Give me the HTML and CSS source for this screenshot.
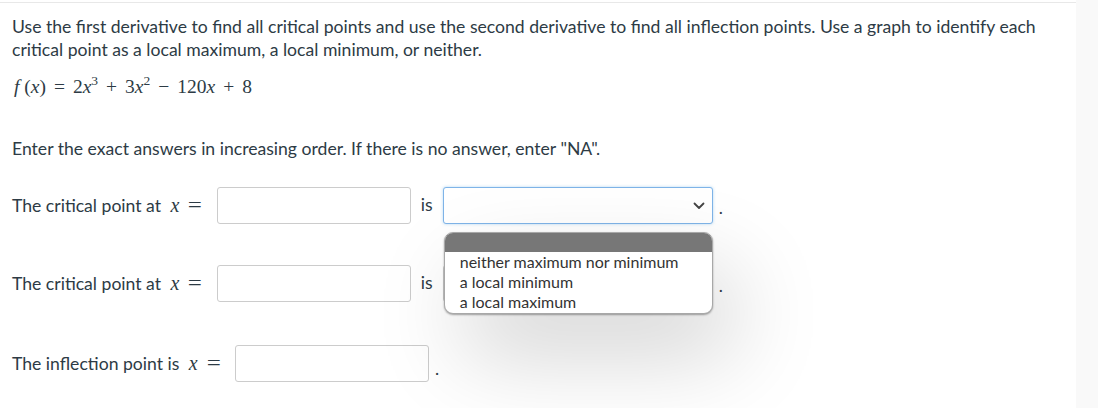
FILE: index.html
```html
<!DOCTYPE html>
<html>
<head>
<meta charset="utf-8">
<link rel="stylesheet" href="styles.css">
</head>
<body>
<div class="page">
  <main class="question">
    <p class="intro">Use the first derivative to find all critical points and use the second derivative to find all inflection points. Use a graph to identify each critical point as a local maximum, a local minimum, or neither.</p>
    <p class="formula"><span class="mi">f</span> <span class="mo">(</span><span class="mi">x</span><span class="mo">)</span><span class="rel">=</span>2<span class="mi">x</span><sup>3</sup><span class="bin">+</span>3<span class="mi">x</span><sup>2</sup><span class="bin">−</span>120<span class="mi">x</span><span class="bin">+</span>8</p>
    <p class="instr">Enter the exact answers in increasing order. If there is no answer, enter "NA".</p>

    <div class="row row1">
      <span class="label">The critical point at <span class="math"><span class="mi">x</span><span class="rel">=</span></span></span>
      <span class="box"></span>
      <span class="is">is</span>
      <span class="select focused">
        <svg class="chev" width="12" height="8" viewBox="0 0 12 8"><path d="M1.5 1.5 L6 6 L10.5 1.5" fill="none" stroke="#444" stroke-width="1.8" stroke-linecap="round" stroke-linejoin="round"/></svg>
        <div class="menu">
          <div class="menu-head"></div>
          <div class="opt">neither maximum nor minimum</div>
          <div class="opt">a local minimum</div>
          <div class="opt">a local maximum</div>
        </div>
      </span>
      <span class="dot">.</span>
    </div>

    <div class="row row2">
      <span class="label">The critical point at <span class="math"><span class="mi">x</span><span class="rel">=</span></span></span>
      <span class="box"></span>
      <span class="is">is</span>
      <span class="select"></span>
      <span class="dot">.</span>
    </div>

    <div class="row row3">
      <span class="label">The inflection point is <span class="math"><span class="mi">x</span><span class="rel">=</span></span></span>
      <span class="box"></span>
      <span class="dot">.</span>
    </div>
  </main>
  <aside class="side"></aside>
</div>
</body>
</html>
```
FILE: styles.css
```css
html, body {
  margin: 0;
  padding: 0;
  background: #ffffff;
  overflow: hidden;
}
body {
  font-family: Lato, "Open Sans", sans-serif;
  color: #2d3b45;
  font-size: 17.6px;
}
.page {
  display: flex;
  height: 408px;
}
.question {
  flex: 1;
  margin-top: 2px;
  border-top: 1px solid #e8e8e8;
  padding: 12px 30px 0 12px;
  position: relative;
}
.side {
  width: 22px;
  background: #f9f9f9;
}
p {
  margin: 0;
}
.intro {
  line-height: 23px;
}
.formula {
  margin-top: 14px;
  font-family: "Liberation Serif", "Times New Roman", serif;
  font-size: 19.5px;
  line-height: 24px;
  padding-left: 2px;
}
.mi {
  font-style: italic;
}
.formula .mo:first-of-type {
  margin-left: 2px;
}
.formula sup {
  font-size: 13.5px;
  vertical-align: 8px;
  line-height: 0;
}
.formula .rel, .formula .bin {
  padding: 0 8px;
}
.instr {
  margin-top: 38px;
  line-height: 24px;
}
.row {
  display: flex;
  align-items: center;
  height: 37px;
}
.row1 { margin-top: 26px; }
.row2 { margin-top: 41px; }
.row3 { margin-top: 43px; }
.label {
  white-space: nowrap;
}
.math {
  font-family: "Liberation Serif", "Times New Roman", serif;
  font-size: 20px;
  padding-left: 5px;
}
.math .rel {
  display: inline-block;
  padding: 0 0 0 7px;
  transform: scaleX(1.25);
  transform-origin: left center;
}
.box {
  width: 192px;
  height: 35px;
  border: 1px solid #cccccc;
  border-radius: 3px;
  margin-left: 19px;
  background: #fff;
}
.is {
  margin-left: 10px;
  width: 22px;
  margin-top: -3px;
}
.select {
  position: relative;
  width: 268px;
  height: 35px;
  border: 1px solid #cccccc;
  border-radius: 3px;
  background: #fff;
}
.select.focused {
  border-color: #7fb4e8;
  box-shadow: 0 0 3px rgba(102, 175, 233, 0.5);
}
.chev {
  position: absolute;
  right: 7px;
  top: 14px;
}
.dot {
  margin-left: 6px;
  margin-top: 4px;
}
.row3 .dot {
  margin-left: 6px;
  margin-top: 10px;
}
.menu {
  position: absolute;
  left: 0;
  top: 44px;
  width: 267px;
  height: 80px;
  border: 1px solid #a8a8a8;
  border-radius: 9px;
  background: #fff;
  overflow: hidden;
  box-shadow: 0 1px 2px rgba(0,0,0,0.35), 20px 40px 90px rgba(0,0,0,0.18);
  z-index: 5;
}
.menu-head {
  height: 19px;
  background: #777777;
}
.opt {
  font-size: 16px;
  line-height: 20px;
  padding-left: 15px;
  color: #333;
}
```
